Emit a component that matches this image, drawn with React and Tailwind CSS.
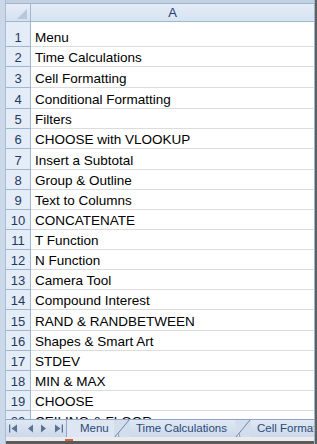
import React from "react";

const rows = [
  ["Menu", 25],
  ["Time Calculations", 20],
  ["Cell Formatting", 21],
  ["Conditional Formatting", 21],
  ["Filters", 20],
  ["CHOOSE with VLOOKUP", 20],
  ["Insert a Subtotal", 21],
  ["Group & Outline", 20],
  ["Text to Columns", 20],
  ["CONCATENATE", 20],
  ["T Function", 20],
  ["N Function", 20],
  ["Camera Tool", 20],
  ["Compound Interest", 20],
  ["RAND & RANDBETWEEN", 21],
  ["Shapes & Smart Art", 20],
  ["STDEV", 20],
  ["MIN & MAX", 20],
  ["CHOOSE", 20],
  ["CEILING & FLOOR", 20],
];

function Slant() {
  return (
    <svg width="16" height="17" viewBox="0 0 16 17" className="shrink-0 block">
      <polygon points="0,0 16,0 16,17 2,17" fill="#d3deed" />
      <line x1="1" y1="17" x2="15" y2="0" stroke="#6f87a8" strokeWidth="1" />
      <polygon points="1,17 4,13.5 5,17" fill="#ffffff" stroke="#6f87a8" strokeWidth="0.8" />
    </svg>
  );
}

function NavBtn({ dir, bar }) {
  return (
    <svg width="9" height="9" viewBox="0 0 9 9" className="block shrink-0">
      {dir === "l" ? (
        <>
          {bar && <rect x="0" y="0.5" width="1.3" height="8" fill="#5a7391" />}
          <polygon points={bar ? "8,0.5 2.5,4.5 8,8.5" : "7,0.5 2,4.5 7,8.5"} fill="#5a7391" />
        </>
      ) : (
        <>
          <polygon points={bar ? "1,0.5 6.5,4.5 1,8.5" : "2,0.5 7,4.5 2,8.5"} fill="#5a7391" />
          {bar && <rect x="7.7" y="0.5" width="1.3" height="8" fill="#5a7391" />}
        </>
      )}
    </svg>
  );
}

export default function App() {
  return (
    <div
      className="w-[317px] h-[444px] overflow-hidden flex bg-[#cfdbeb]"
      style={{ fontFamily: '"Liberation Sans", Arial, sans-serif' }}
    >
      {/* left strip */}
      <div className="w-[6px] shrink-0 bg-[#cbd8ea] border-r border-[#aabcd3]" />
      <div className="flex-1 flex flex-col min-w-0">
        {/* top strip */}
        <div className="h-[3px] shrink-0 bg-[#c2d0e2]" />
        {/* column header */}
        <div className="h-[19px] shrink-0 flex border-b border-[#9eb6ce]">
          <div className="w-[25px] shrink-0 bg-gradient-to-b from-[#e6edf7] to-[#d5e1f0] border-r border-t border-[#9eb6ce] relative">
            <svg width="10" height="10" className="absolute right-[3px] bottom-[2px]">
              <polygon points="10,0 10,10 0,10" fill="#b7c8dd" />
            </svg>
          </div>
          <div className="flex-1 bg-gradient-to-b from-[#e4ecf7] to-[#d6e3f2] border-t border-[#9eb6ce] flex items-center justify-center text-[13px] text-[#1f3d73] pt-[1px]">
            A
          </div>
        </div>
        {/* grid */}
        <div className="flex-1 min-h-0 overflow-hidden bg-white flex flex-col">
          {rows.map(([label, h], i) => (
            <div key={i} className="flex shrink-0" style={{ height: h }}>
              <div className="w-[25px] shrink-0 bg-[#e4ecf7] border-r border-b border-[#9eb6ce] flex items-end justify-center pb-[1px] text-[13px] leading-[15px] text-[#1f3a62]">
                {i + 1}
              </div>
              <div className="flex-1 border-b border-[#dadcdd] flex items-end pl-[4px] pb-[1px] text-[13.5px] leading-[15px] text-black whitespace-nowrap overflow-hidden">
                {label}
              </div>
            </div>
          ))}
        </div>
        {/* sheet tabs */}
        <div className="h-[18px] shrink-0 flex border-t border-[#8fa8c8] bg-gradient-to-b from-[#dfe8f4] to-[#ccd9ea] text-[11.5px] text-[#2d4a78] whitespace-nowrap overflow-hidden">
          <div className="w-[61px] shrink-0 flex items-center pl-[3px] border-r border-[#8fa8c8]">
            <NavBtn dir="l" bar />
            <div className="w-[8px] shrink-0" />
            <NavBtn dir="l" />
            <div className="w-[4px] shrink-0" />
            <NavBtn dir="r" />
            <div className="w-[6px] shrink-0" />
            <NavBtn dir="r" bar />
          </div>
          <div className="w-[47px] shrink-0 flex items-center pl-[13px] bg-[#dde6f2]">Menu</div>
          <Slant />
          <div className="w-[105px] shrink-0 flex items-center pl-[6px]">Time Calculations</div>
          <Slant />
          <div className="flex-1 flex items-center pl-[6px]">Cell Formatting</div>
        </div>
        {/* bottom strip */}
        <div className="h-[4px] shrink-0 bg-[#ebebeb] flex">
          <div className="ml-[59px] w-[8px] h-[2px] mt-[2px] bg-[#d9614a]" />
        </div>
        <div className="h-[3px] shrink-0 bg-[#5b5b5b]" />
      </div>
      {/* right border */}
      <div className="w-[3px] shrink-0 bg-[#5e5e5e] border-l border-[#9eb6ce]" />
    </div>
  );
}
